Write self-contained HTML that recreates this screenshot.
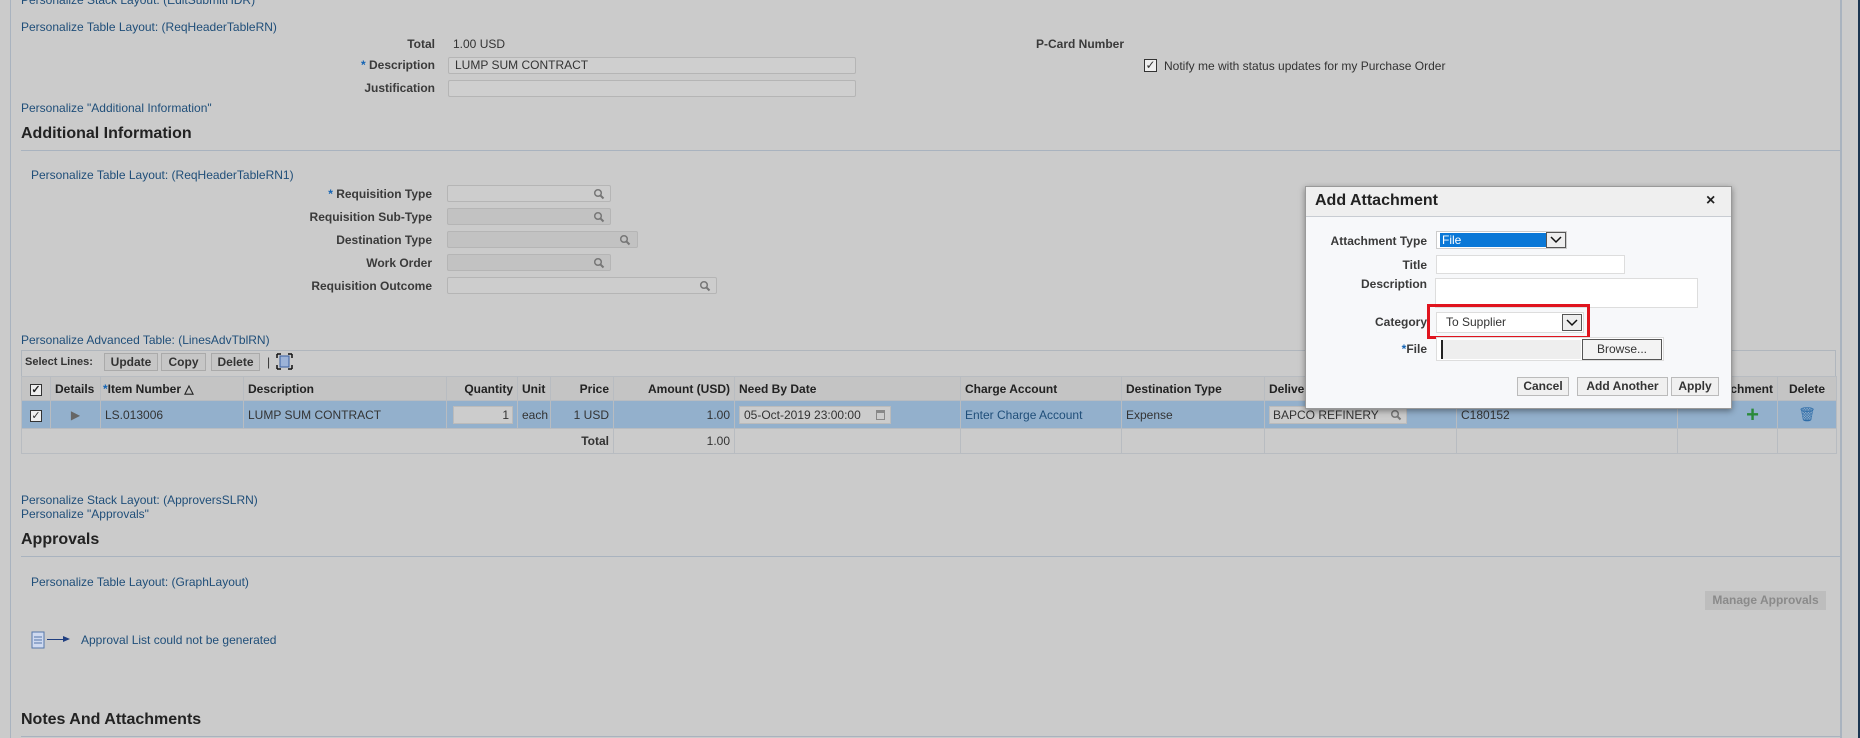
<!DOCTYPE html>
<html><head><meta charset="utf-8"><style>
*{box-sizing:border-box;margin:0;padding:0}
body{width:1860px;height:738px;background:#cbcbcb;font-family:"Liberation Sans",Arial,sans-serif;font-size:12px;color:#333;position:relative;overflow:hidden}
.a{position:absolute;white-space:nowrap}
.lk{color:#1f4e79}
.lb{font-weight:bold;color:#3a3a3a;text-align:right}
.inp{position:absolute;border:1px solid #b5b5b5;background:#cfcfcf;border-radius:2px}
.h{font-size:16px;font-weight:bold;color:#222}
.hl{position:absolute;height:1px;background:#a9b3bf}
.mg{position:absolute;width:12px;height:12px}
.star{color:#1464b4;font-weight:bold}
td{border:1px solid #b8bcc1;height:100%;padding:0 4px;white-space:nowrap}
.tb{position:absolute;top:353px;height:18px;border:1px solid #aaa;background:#c6c6c6;font-weight:bold;text-align:center;line-height:16px}
.db{position:absolute;border:1px solid #bbb;background:#f0f0f0;font-weight:bold;text-align:center;line-height:16px;height:19px;top:377px}
</style></head><body>
<svg width="0" height="0" style="position:absolute"><defs><symbol id="mg" viewBox="0 0 12 12"><circle cx="5" cy="5" r="3.3" fill="none" stroke="#777" stroke-width="1.5"/><path d="M7.5 7.5 L10.5 10.5" stroke="#777" stroke-width="2"/></symbol></defs></svg>
<div class="a" style="left:10px;top:0;width:1px;height:738px;background:#a9b3bf"></div>
<div class="a" style="left:1840px;top:0;width:2px;height:738px;background:#a9b3bf"></div>
<div class="a" style="left:1858px;top:0;width:2px;height:738px;background:#1b3550"></div>

<div class="a lk" style="left:21px;top:-7px">Personalize Stack Layout: (EditSubmitHDR)</div>
<div class="a lk" style="left:21px;top:20px">Personalize Table Layout: (ReqHeaderTableRN)</div>
<div class="a lb" style="right:1425px;top:37px">Total</div>
<div class="a" style="left:453px;top:37px">1.00 USD</div>
<div class="a lb" style="right:1425px;top:58px"><span class="star">*</span> Description</div>
<div class="inp" style="left:448px;top:57px;width:408px;height:17px"></div>
<div class="a" style="left:455px;top:58px">LUMP SUM CONTRACT</div>
<div class="a lb" style="right:1425px;top:81px">Justification</div>
<div class="inp" style="left:448px;top:80px;width:408px;height:17px"></div>
<div class="a lb" style="left:1036px;top:37px">P-Card Number</div>
<div class="a" style="left:1144px;top:59px;width:13px;height:13px;border:1px solid #333;background:#eee;font-size:12px;line-height:11px;text-align:center">✓</div>
<div class="a" style="left:1164px;top:59px">Notify me with status updates for my Purchase Order</div>
<div class="a lk" style="left:21px;top:101px">Personalize "Additional Information"</div>
<div class="a h" style="left:21px;top:125px">Additional Information</div>
<div class="hl" style="left:21px;top:150px;width:1820px"></div>

<div class="a lk" style="left:31px;top:168px">Personalize Table Layout: (ReqHeaderTableRN1)</div>
<div class="a lb" style="right:1428px;top:187px"><span class="star">*</span> Requisition Type</div>
<div class="a lb" style="right:1428px;top:210px">Requisition Sub-Type</div>
<div class="a lb" style="right:1428px;top:233px">Destination Type</div>
<div class="a lb" style="right:1428px;top:256px">Work Order</div>
<div class="a lb" style="right:1428px;top:279px">Requisition Outcome</div>
<div class="inp" style="left:447px;top:185px;width:164px;height:17px;background:#cdcdcd"></div><svg class="mg" style="left:593px;top:188px"><use href="#mg"/></svg>
<div class="inp" style="left:447px;top:208px;width:164px;height:17px;background:#c2c2c2"></div><svg class="mg" style="left:593px;top:211px"><use href="#mg"/></svg>
<div class="inp" style="left:447px;top:231px;width:191px;height:17px;background:#c2c2c2"></div><svg class="mg" style="left:619px;top:234px"><use href="#mg"/></svg>
<div class="inp" style="left:447px;top:254px;width:164px;height:17px;background:#c2c2c2"></div><svg class="mg" style="left:593px;top:257px"><use href="#mg"/></svg>
<div class="inp" style="left:447px;top:277px;width:270px;height:17px;background:#cdcdcd"></div><svg class="mg" style="left:699px;top:280px"><use href="#mg"/></svg>

<div class="a lk" style="left:21px;top:333px">Personalize Advanced Table: (LinesAdvTblRN)</div>
<div class="a" style="left:21px;top:350px;width:1815px;height:104px;border:1px solid #b0b6bd"></div>
<div class="a" style="left:25px;top:356px;font-weight:bold;font-size:11px">Select Lines:</div>
<div class="tb" style="left:104px;width:54px">Update</div>
<div class="tb" style="left:161px;width:45px">Copy</div>
<div class="tb" style="left:211px;width:49px">Delete</div>
<div class="a" style="left:267px;top:355px">|</div>
<svg class="a" style="left:276px;top:353px" width="17" height="17" viewBox="0 0 17 17"><rect x="4" y="3" width="9" height="11" fill="#9cb3d8" stroke="#3a5fa0"/><path d="M1 1h4M1 1v4M16 1h-4M16 1v4M1 16h4M1 16v-4M16 16h-4M16 16v-4" stroke="#111" stroke-width="1.5" fill="none"/></svg>

<table class="a" style="left:21px;top:376px;width:1815px;border-collapse:collapse;font-size:12px;table-layout:fixed">
<colgroup><col style="width:29px"><col style="width:50px"><col style="width:143px"><col style="width:203px"><col style="width:71px"><col style="width:33px"><col style="width:63px"><col style="width:121px"><col style="width:226px"><col style="width:161px"><col style="width:143px"><col style="width:192px"><col style="width:221px"><col style="width:100px"><col style="width:59px"></colgroup>
<tr style="height:24px;background:#c4c4c4;font-weight:bold;color:#222">
<td style="text-align:center"><span style="display:inline-block;width:12px;height:12px;border:1px solid #333;background:#eee;line-height:10px;font-size:11px">✓</span></td><td>Details</td><td style="padding-left:2px"><span class="star">*</span>Item Number △</td><td>Description</td><td style="text-align:right">Quantity</td><td>Unit</td><td style="text-align:right">Price</td><td style="text-align:right">Amount (USD)</td><td>Need By Date</td><td>Charge Account</td><td>Destination Type</td><td>Deliver-To Location</td><td></td><td style="text-align:right">Attachment</td><td style="text-align:center">Delete</td></tr>
<tr style="height:28px;background:#93b0cc">
<td style="text-align:center"><span style="display:inline-block;width:12px;height:12px;border:1px solid #333;background:#eee;line-height:10px;font-size:11px">✓</span></td><td style="text-align:center;color:#666">▶</td><td>LS.013006</td><td>LUMP SUM CONTRACT</td><td style="text-align:right"><span style="display:inline-block;width:60px;height:18px;background:#ccc;border:1px solid #bbb;text-align:right;padding-right:3px;line-height:16px">1</span></td><td>each</td><td style="text-align:right">1 USD</td><td style="text-align:right">1.00</td><td><span style="display:inline-block;width:152px;height:18px;background:#ccc;border:1px solid #bbb;padding-left:4px;line-height:16px;position:relative">05-Oct-2019 23:00:00<span style="position:absolute;right:5px;top:3px;width:9px;height:10px;border:1px solid #888;border-top-width:3px"></span></span></td><td class="lk">Enter Charge Account</td><td>Expense</td><td><span style="display:inline-block;width:138px;height:18px;background:#ccc;border:1px solid #bbb;padding-left:3px;line-height:16px;position:relative">BAPCO REFINERY<svg style="position:absolute;right:4px;top:2px" width="12" height="12"><use href="#mg"/></svg></span></td><td>C180152</td><td style="text-align:right;color:#2a8a3a;font-size:22px;font-weight:bold;padding-right:18px">+</td><td style="text-align:center;color:#2d6ca8;font-size:14px">🗑</td></tr>
<tr style="height:25px;background:#cbcbcb"><td colspan="7" style="text-align:right;font-weight:bold">Total</td><td style="text-align:right">1.00</td><td></td><td></td><td></td><td></td><td></td><td></td><td></td></tr>
</table>

<div class="a lk" style="left:21px;top:493px">Personalize Stack Layout: (ApproversSLRN)</div>
<div class="a lk" style="left:21px;top:507px">Personalize "Approvals"</div>
<div class="a h" style="left:21px;top:531px">Approvals</div>
<div class="hl" style="left:21px;top:556px;width:1820px"></div>
<div class="a lk" style="left:31px;top:575px">Personalize Table Layout: (GraphLayout)</div>
<div class="a" style="left:1705px;top:591px;width:121px;height:19px;background:#bdbdbd;color:#8a8a8a;font-weight:bold;text-align:center;line-height:19px">Manage Approvals</div>
<svg class="a" style="left:31px;top:631px" width="15" height="18"><rect x="1" y="1" width="12" height="16" fill="#cfdaf0" stroke="#5577aa"/><path d="M3 6h8M3 9h8M3 12h8" stroke="#5577aa"/></svg>
<div class="a" style="left:47px;top:639px;width:20px;height:1px;background:#1f3e80"></div>
<div class="a" style="left:63px;top:636px;width:0;height:0;border-left:7px solid #1f3e80;border-top:3px solid transparent;border-bottom:3px solid transparent"></div>
<div class="a lk" style="left:81px;top:633px">Approval List could not be generated</div>
<div class="a h" style="left:21px;top:711px">Notes And Attachments</div>
<div class="hl" style="left:21px;top:736px;width:1820px"></div>

<!-- dialog -->
<div class="a" style="left:1305px;top:186px;width:427px;height:223px;background:#f7f8fa;border:1px solid #999;box-shadow:0 2px 6px rgba(0,0,0,.4)"></div>
<div class="a" style="left:1306px;top:187px;width:425px;height:30px;background:#efefef;border-bottom:1px solid #c8ccd2"></div>
<div class="a" style="left:1315px;top:192px;font-size:16px;font-weight:bold;color:#222">Add Attachment</div>
<div class="a" style="left:1706px;top:192px;font-size:16px;font-weight:bold;color:#222">×</div>
<div class="a lb" style="right:433px;top:234px">Attachment Type</div>
<div class="a" style="left:1436px;top:231px;width:131px;height:18px;border:1px solid #ccc;background:#fff"></div>
<div class="a" style="left:1440px;top:233px;width:106px;height:14px;background:#0a78d7;color:#fff;padding-left:2px;line-height:14px">File</div>
<svg class="a" style="left:1546px;top:232px" width="20" height="16"><rect x=".5" y=".5" width="19" height="15" fill="#eee" stroke="#555"/><path d="M5 5l5 5 5-5" fill="none" stroke="#111" stroke-width="1.5"/></svg>
<div class="a lb" style="right:433px;top:258px">Title</div>
<div class="a" style="left:1436px;top:255px;width:189px;height:19px;border:1px solid #ddd;background:#fff"></div>
<div class="a lb" style="right:433px;top:277px">Description</div>
<div class="a" style="left:1435px;top:278px;width:263px;height:30px;border:1px solid #ddd;background:#fff"></div>
<div class="a" style="left:1427px;top:304px;width:163px;height:35px;border:3px solid #e0141e"></div>
<div class="a lb" style="right:433px;top:315px">Category</div>
<div class="a" style="left:1436px;top:312px;width:148px;height:21px;border:1px solid #ddd;background:#fff;padding-left:9px;line-height:19px">To Supplier</div>
<svg class="a" style="left:1562px;top:314px" width="20" height="17"><rect x=".5" y=".5" width="19" height="16" fill="#eee" stroke="#555"/><path d="M5 6l5 5 5-5" fill="none" stroke="#111" stroke-width="1.5"/></svg>
<div class="a lb" style="right:433px;top:342px"><span class="star">*</span>File</div>
<div class="a" style="left:1436px;top:337px;width:228px;height:24px;border:1px solid #ddd;background:#fff"></div>
<div class="a" style="left:1441px;top:340px;width:140px;height:19px;background:#eee;border-left:2px solid #222"></div>
<div class="a" style="left:1582px;top:339px;width:80px;height:21px;border:1px solid #555;background:#f3f3f3;text-align:center;line-height:19px">Browse...</div>
<div class="db" style="left:1517px;width:52px">Cancel</div>
<div class="db" style="left:1577px;width:91px">Add Another</div>
<div class="db" style="left:1671px;width:48px">Apply</div>
</body></html>
